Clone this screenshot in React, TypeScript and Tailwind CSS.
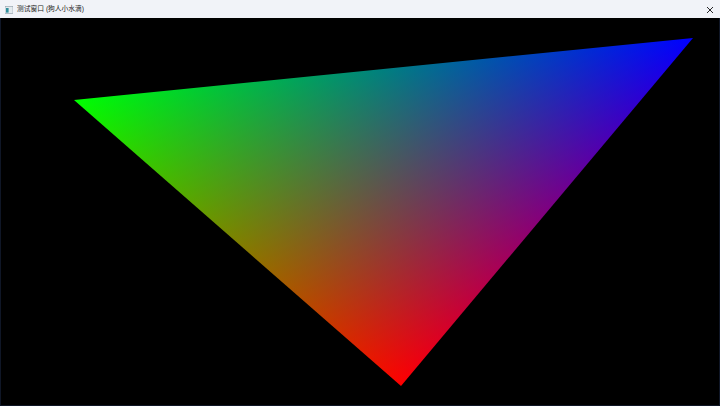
import React from 'react';

type Pt = [number, number];

const GREEN: Pt = [74, 100];
const BLUE: Pt = [693, 38];
const RED: Pt = [401, 386];

// foot of the altitude from p onto the edge a-b, so the gradient reaches zero on that edge
const foot = (p: Pt, a: Pt, b: Pt): Pt => {
  const dx = b[0] - a[0];
  const dy = b[1] - a[1];
  const t = ((p[0] - a[0]) * dx + (p[1] - a[1]) * dy) / (dx * dx + dy * dy);
  return [a[0] + t * dx, a[1] + t * dy];
};

const corners = [
  { id: 'g', color: '#00ff00', p: GREEN, end: foot(GREEN, BLUE, RED) },
  { id: 'b', color: '#0000ff', p: BLUE, end: foot(BLUE, GREEN, RED) },
  { id: 'r', color: '#ff0000', p: RED, end: foot(RED, GREEN, BLUE) },
];

const points = [GREEN, BLUE, RED].map((p) => p.join(',')).join(' ');

const App: React.FC = () => {
  return (
    <div className="w-[720px] h-[406px] flex flex-col overflow-hidden bg-black font-['Liberation_Sans','Noto_Sans_CJK_SC',sans-serif]">
      {/* Title bar */}
      <div className="h-[18px] shrink-0 flex items-center justify-between bg-[#f1f3f8] pl-[5px] pr-[6px]">
        <div className="flex items-center gap-[4px] pt-[1px]">
          <svg width="8" height="8" viewBox="0 0 8 8">
            <rect x="0" y="0.5" width="8" height="7" fill="#e4ebef" stroke="#8a98a3" strokeWidth="0.6" />
            <rect x="1" y="2" width="2.6" height="4.6" fill="#2f8f9c" />
          </svg>
          <span className="text-[6.75px] leading-none text-[#222]">测试窗口 (狗人小水滴)</span>
        </div>
        <svg width="8" height="8" viewBox="0 0 8 8" className="text-[#111] mt-[1px]">
          <path d="M1 1 L7 7 M7 1 L1 7" stroke="currentColor" strokeWidth="0.9" fill="none" />
        </svg>
      </div>

      {/* Render area */}
      <div className="flex-1 bg-black shadow-[inset_1px_0_0_#0f1626,inset_-1px_0_0_#0f1626,inset_0_-1px_0_#0f1626]">
        <svg width="720" height="388" viewBox="0 18 720 388" className="block isolate">
          <defs>
            {corners.map((c) => (
              <linearGradient
                key={c.id}
                id={c.id}
                gradientUnits="userSpaceOnUse"
                x1={c.p[0]}
                y1={c.p[1]}
                x2={c.end[0]}
                y2={c.end[1]}
              >
                <stop offset="0" stopColor={c.color} />
                <stop offset="1" stopColor="#000000" />
              </linearGradient>
            ))}
          </defs>
          {corners.map((c) => (
            <polygon key={c.id} points={points} fill={`url(#${c.id})`} className="mix-blend-plus-lighter" />
          ))}
        </svg>
      </div>
    </div>
  );
};

export default App;
